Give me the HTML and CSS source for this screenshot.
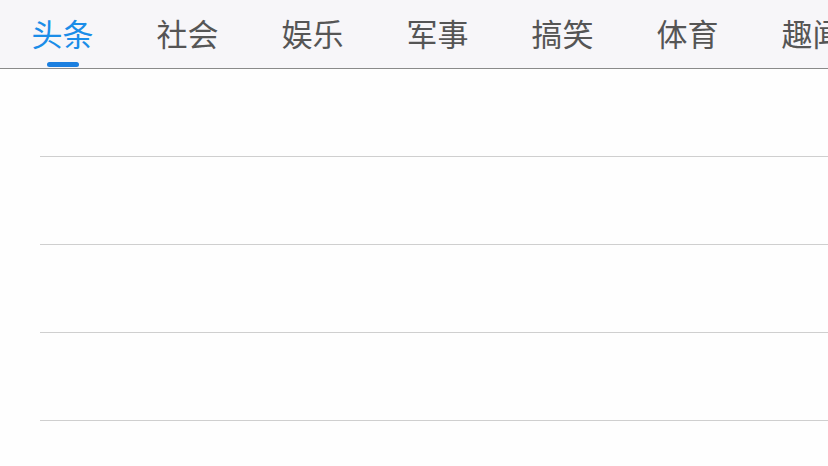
FILE: index.html
```html
<!DOCTYPE html>
<html lang="zh">
<head>
<meta charset="utf-8">
<link rel="stylesheet" href="styles.css">
</head>
<body>
<div class="tabs">
  <div class="tab active"><span class="label">头条</span><span class="bar"></span></div>
  <div class="tab"><span class="label">社会</span></div>
  <div class="tab"><span class="label">娱乐</span></div>
  <div class="tab"><span class="label">军事</span></div>
  <div class="tab"><span class="label">搞笑</span></div>
  <div class="tab"><span class="label">体育</span></div>
  <div class="tab"><span class="label">趣闻</span></div>
</div>
<div class="list">
  <div class="row"></div>
  <div class="row"></div>
  <div class="row"></div>
  <div class="row"></div>
</div>
</body>
</html>
```
FILE: styles.css
```css
html, body {
  margin: 0;
  padding: 0;
  background: #fefefe;
  overflow: hidden;
  font-family: "Noto Sans CJK SC", "Noto Sans", sans-serif;
}
.tabs {
  display: flex;
  height: 68px;
  background: #f7f6f9;
  border-bottom: 1px solid #8a8a8a;
  white-space: nowrap;
  overflow: hidden;
}
.tab {
  flex: 0 0 125px;
  position: relative;
  display: flex;
  justify-content: center;
  align-items: flex-start;
}
.label {
  font-size: 31px;
  line-height: 31px;
  margin-top: 17px;
  color: #555555;
}
.tab.active .label {
  color: #1b8de8;
}
.bar {
  position: absolute;
  left: 47px;
  top: 62px;
  width: 32px;
  height: 5px;
  border-radius: 3px;
  background: #1b7fe0;
}
.row {
  height: 87px;
  margin-left: 40px;
  border-bottom: 1px solid #cfcfcf;
}
```
